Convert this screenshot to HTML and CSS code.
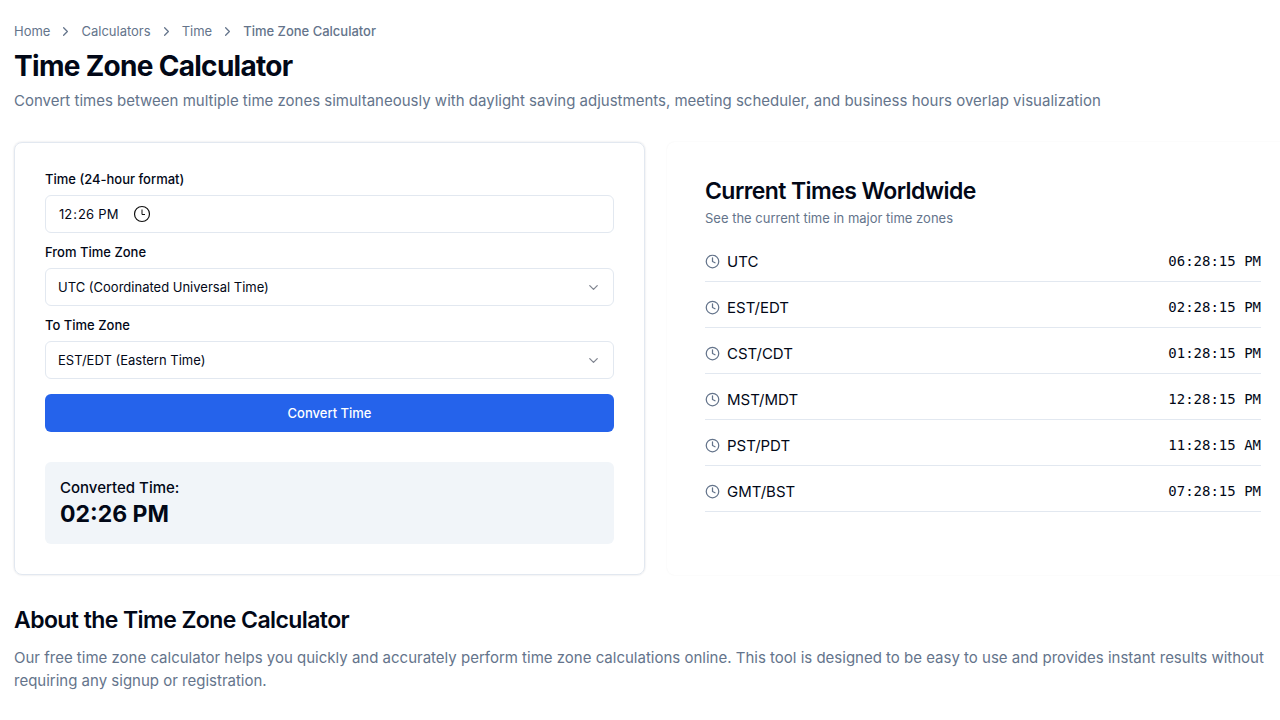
FILE: index.html
```
<!doctype html>
<html lang="en">

<head>
    <meta charset="utf-8">
    <title>Time Zone Calculator</title>
    <link rel="stylesheet" href="styles.css">
</head>

<body>
    <svg class="sprite" aria-hidden="true">
        <symbol id="chevron" viewBox="0 0 24 24"><path d="m9 18 6-6-6-6" /></symbol>
        <symbol id="clock" viewBox="0 0 24 24"><circle cx="12" cy="12" r="10" /><path d="M12 6v6l4 2" /></symbol>
    </svg>

    <main class="page">
        <nav class="breadcrumb" aria-label="Breadcrumb">
            <a href="#">Home</a>
            <svg><use href="#chevron" /></svg>
            <a href="#">Calculators</a>
            <svg><use href="#chevron" /></svg>
            <a href="#">Time</a>
            <svg><use href="#chevron" /></svg>
            <span class="current">Time Zone Calculator</span>
        </nav>

        <h1>Time Zone Calculator</h1>
        <p class="intro">Convert times between multiple time zones simultaneously with daylight saving adjustments, meeting scheduler, and business hours overlap visualization</p>

        <div class="columns">
            <form class="card converter">
                <div class="field">
                    <label for="time">Time (24-hour format)</label>
                    <input type="time" id="time" class="control" value="12:26">
                </div>
                <div class="field">
                    <label for="from">From Time Zone</label>
                    <select id="from" class="control">
                        <option>UTC (Coordinated Universal Time)</option>
                        <option>EST/EDT (Eastern Time)</option>
                    </select>
                </div>
                <div class="field">
                    <label for="to">To Time Zone</label>
                    <select id="to" class="control">
                        <option>EST/EDT (Eastern Time)</option>
                        <option>UTC (Coordinated Universal Time)</option>
                    </select>
                </div>
                <button type="button" class="convert">Convert Time</button>
                <div class="result">
                    <p>Converted Time:</p>
                    <output>02:26 PM</output>
                </div>
            </form>

            <section class="card world">
                <h2>Current Times Worldwide</h2>
                <p class="hint">See the current time in major time zones</p>
                <ul class="zones">
                    <li><svg><use href="#clock" /></svg><span>UTC</span><time>06:28:15 PM</time></li>
                    <li><svg><use href="#clock" /></svg><span>EST/EDT</span><time>02:28:15 PM</time></li>
                    <li><svg><use href="#clock" /></svg><span>CST/CDT</span><time>01:28:15 PM</time></li>
                    <li><svg><use href="#clock" /></svg><span>MST/MDT</span><time>12:28:15 PM</time></li>
                    <li><svg><use href="#clock" /></svg><span>PST/PDT</span><time>11:28:15 AM</time></li>
                    <li><svg><use href="#clock" /></svg><span>GMT/BST</span><time>07:28:15 PM</time></li>
                </ul>
            </section>
        </div>

        <section class="about">
            <h2>About the Time Zone Calculator</h2>
            <p>Our free time zone calculator helps you quickly and accurately perform time zone calculations online. This tool is designed to be easy to use and provides instant results without requiring any signup or registration.</p>
        </section>
    </main>
</body>

</html>
```

FILE: styles.css
```
* {
    box-sizing: border-box;
}

body {
    margin: 0;
    overflow-x: hidden;
    background: white;
    color: #020817;
    font-family: Inter, sans-serif;
    font-size: 15px;
    line-height: 23px;
}

h1,
h2,
p,
ul {
    margin: 0;
    padding: 0;
}

svg {
    fill: none;
    stroke: currentColor;
    stroke-width: 2;
    stroke-linecap: round;
    stroke-linejoin: round;
}

.sprite {
    display: none;
}

.page {
    padding: 22px 0 0 14px;
}

/* Breadcrumb */
.breadcrumb {
    display: flex;
    align-items: center;
    gap: 8px;
    color: #64748b;
    font-size: 13px;
    line-height: 19px;
}

.breadcrumb a {
    color: inherit;
    text-decoration: none;
}

.breadcrumb svg {
    width: 15px;
    height: 15px;
}

.breadcrumb .current {
    font-weight: 500;
}

h1 {
    margin-top: 8px;
    font-size: 28px;
    line-height: 34px;
    letter-spacing: -0.025em;
}

.intro {
    margin-top: 6px;
    color: #64748b;
}

h2 {
    font-size: 23px;
    font-weight: 600;
    line-height: 30px;
    letter-spacing: -0.025em;
}

/* Cards */
.columns {
    display: grid;
    grid-template-columns: 1fr 1fr;
    gap: 22px;
    margin-top: 30px;
    margin-right: -18px;
}

.card {
    border-radius: 8px;
}

.converter {
    border: 1px solid #e2e8f0;
    padding: 29px 30px 30px;
    box-shadow: 0 0 2px rgba(15, 23, 42, 0.15);
}

.field {
    display: flex;
    flex-direction: column;
    gap: 9px;
    margin-bottom: 13px;
}

.field label {
    font-size: 13px;
    font-weight: 500;
    line-height: 14px;
}

.control {
    width: 100%;
    height: 38px;
    margin-bottom: -1px;
    border: 1px solid #e2e8f0;
    border-radius: 6px;
    padding: 0 12px;
    background: white;
    color: inherit;
    font-family: inherit;
    font-size: 13px;
}

input.control::-webkit-datetime-edit {
    flex: none;
}

input.control::-webkit-calendar-picker-indicator {
    width: 18px;
    height: 18px;
    margin-left: 12px;
    padding: 0;
    background: url("data:image/svg+xml,%3Csvg xmlns='http://www.w3.org/2000/svg' viewBox='0 0 18 18' fill='none' stroke='%23111'%3E%3Ccircle cx='9' cy='9' r='7.5' stroke-width='1.2'/%3E%3Cpath d='M9 4.5V9.5H12'/%3E%3C/svg%3E") center / 18px 18px no-repeat;
}

select.control {
    appearance: none;
    background: white url("data:image/svg+xml,%3Csvg xmlns='http://www.w3.org/2000/svg' viewBox='0 0 24 24' fill='none' stroke='%23808590' stroke-width='2' stroke-linecap='round' stroke-linejoin='round'%3E%3Cpath d='m6 9 6 6 6-6'/%3E%3C/svg%3E") no-repeat right 12px center / 15px 15px;
}

.convert {
    display: block;
    width: 100%;
    height: 38px;
    margin-top: 16px;
    border: none;
    border-radius: 6px;
    background: #2563eb;
    color: white;
    font-family: inherit;
    font-size: 13px;
    font-weight: 500;
}

.result {
    margin-top: 30px;
    border-radius: 6px;
    padding: 14px 15px 15px;
    background: #f1f5f9;
}

.result p {
    font-weight: 500;
}

.result output {
    display: block;
    font-size: 23px;
    font-weight: 700;
    line-height: 30px;
}

/* Current times */
.world {
    padding: 34px 37px 34px 38px;
    box-shadow: 0 0 2px rgba(0, 0, 0, 0.06);
}

.hint {
    margin-top: 3px;
    color: #64748b;
    font-size: 13px;
    line-height: 19px;
}

.zones {
    margin-top: 22px;
    list-style: none;
}

.zones li {
    display: flex;
    align-items: center;
    gap: 7px;
    margin-bottom: 14px;
    border-bottom: 1px solid #e2e8f0;
    padding-bottom: 8px;
}

.zones svg {
    width: 15px;
    height: 15px;
    color: #64748b;
}

.zones time {
    margin-left: auto;
    font-family: "DejaVu Sans Mono", monospace;
    font-size: 14px;
}

.about {
    margin-top: 30px;
}

.about p {
    margin-top: 11px;
    color: #64748b;
}
```
